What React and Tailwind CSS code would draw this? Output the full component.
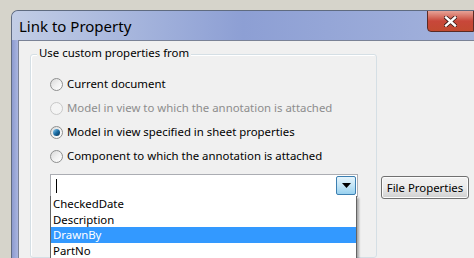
import React from 'react';

const font = { fontFamily: '"Noto Sans", "Open Sans", sans-serif' };

const Radio = ({ label, checked, disabled }) => (
  <div className="flex items-center h-[24px]">
    <span
      className={
        'w-[13px] h-[13px] rounded-full border flex items-center justify-center ' +
        (disabled
          ? 'border-[#c8c8c8] bg-[#f4f4f4]'
          : 'border-[#8e8f8f] bg-gradient-to-br from-[#d8d8d8] via-[#f0f0f0] to-[#ffffff]')
      }
    >
      {checked && (
        <span className="w-[7px] h-[7px] rounded-full bg-gradient-to-br from-[#8fd3f5] via-[#1a6ea5] to-[#0a3050]" />
      )}
    </span>
    <span className={'ml-[4px] text-[11.4px] ' + (disabled ? 'text-[#8d8d8d]' : 'text-[#000]')}>{label}</span>
  </div>
);

const items = ['CheckedDate', 'Description', 'DrawnBy', 'PartNo'];

export default function App() {
  return (
    <div className="w-[474px] h-[258px] overflow-hidden bg-[#d6d4cb] pt-[10px] pl-[11px]" style={font}>
      <div className="h-[248px] flex flex-col rounded-tl-[7px] border-l border-t border-[#5f6b80] bg-[#a6b3da] overflow-hidden">
        {/* title bar */}
        <div className="h-[29px] flex items-center relative bg-gradient-to-r from-[#c2cde5] via-[#8d9fd4] to-[#a3b2dc]">
          <span className="ml-[7px] mt-[2px] text-[15px] text-[#000]">Link to Property</span>
          <div className="absolute right-0 top-[-1px] w-[47px] h-[22px] rounded-bl-[4px] border border-[#5a2a24] bg-gradient-to-b from-[#e6a297] via-[#c8473a] to-[#c24a30] flex items-center justify-center">
            <svg width="13" height="11" viewBox="0 0 13 11">
              <path d="M2 1.5 L11 9.5 M11 1.5 L2 9.5" stroke="#3a1a16" strokeWidth="4" strokeLinecap="square" />
              <path d="M2 1.5 L11 9.5 M11 1.5 L2 9.5" stroke="#ffffff" strokeWidth="2.4" strokeLinecap="square" />
            </svg>
          </div>
        </div>
        {/* client */}
        <div className="flex-1 flex">
          <div className="w-[6px] bg-gradient-to-r from-[#8d9bcf] to-[#a9b5e0]" />
          <div className="flex-1 border-l border-t border-[#7a8296] bg-[#f0f0f0] pl-[11px] pt-[13px] flex">
            {/* group box */}
            <div className="w-[347px] relative border border-[#d5dfe5] rounded-[3px] shadow-[inset_1px_1px_0_#fff] pl-[19px] pt-[17px]">
              <span className="absolute left-[6px] top-[-10px] px-[2px] bg-[#f0f0f0] text-[11.4px] leading-[16px] text-[#000]">
                Use custom properties from
              </span>
              <Radio label="Current document" />
              <Radio label="Model in view to which the annotation is attached" disabled />
              <Radio label="Model in view specified in sheet properties" checked />
              <Radio label="Component to which the annotation is attached" />
              <div className="mt-[6px] relative w-[308px]">
                <div className="h-[23px] border border-[#abadb3] bg-white flex items-center">
                  <span className="ml-[5px] w-px h-[14px] bg-black" />
                  <div className="ml-auto mr-[1px] w-[20px] h-[19px] border border-[#3c7fb1] rounded-[2px] bg-gradient-to-b from-[#e5f4fc] via-[#c4e5f6] to-[#98d1ef] flex items-center justify-center">
                    <svg width="9" height="5" viewBox="0 0 9 5">
                      <path d="M0 0 H9 L4.5 5 Z" fill="#000" />
                    </svg>
                  </div>
                </div>
                <div className="absolute left-0 top-[22px] w-[307px] bg-white border border-[#646464] border-t-0 shadow-[2px_2px_2px_rgba(0,0,0,0.3)]">
                  {items.map((it) => (
                    <div
                      key={it}
                      className={
                        'h-[15.5px] pl-[2px] text-[11.4px] leading-[15px] ' +
                        (it === 'DrawnBy' ? 'bg-[#3399ff] text-white' : 'text-black')
                      }
                    >
                      {it}
                    </div>
                  ))}
                </div>
              </div>
            </div>
            {/* right column */}
            <div className="flex-1 pl-[4px] pt-[120px]">
              <button className="w-[88px] h-[23px] rounded-[3px] border border-[#707070] bg-gradient-to-b from-[#f2f2f2] via-[#ebebeb] to-[#cfcfcf] text-[11.4px] text-black shadow-[inset_0_0_0_1px_#fcfcfc]">
                File Properties
              </button>
            </div>
          </div>
        </div>
      </div>
    </div>
  );
}
